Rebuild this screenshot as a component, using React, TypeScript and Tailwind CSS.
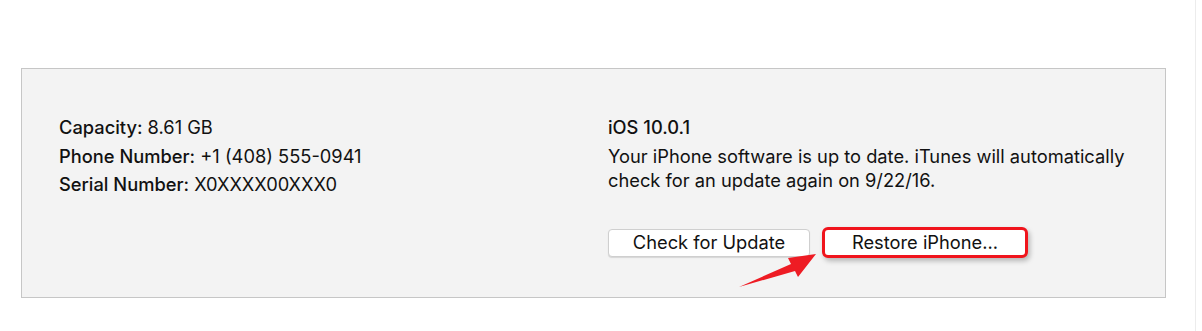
export default function App() {
  return (
    <div
      className="relative w-[1202px] h-[331px] bg-white overflow-hidden"
      style={{ fontFamily: "Inter, 'Noto Sans', sans-serif" }}
    >
      <div className="absolute right-[6px] top-0 h-full w-px bg-[#ececec]" />
      <div className="pt-[68px] pl-[21px]">
        <div className="w-[1145px] h-[230px] border border-[#c6c6c6] bg-[#f3f3f3] flex pl-[37px] pt-[44px] text-[18.3px] text-[#111]">
          <div className="w-[549px] leading-[28.5px]">
            <div>
              <span className="font-medium">Capacity:</span> 8.61 GB
            </div>
            <div>
              <span className="font-medium">Phone Number:</span> +1 (408) 555-0941
            </div>
            <div>
              <span className="font-medium">Serial Number:</span> X0XXXX00XXX0
            </div>
          </div>
          <div className="flex flex-col">
            <div className="font-medium leading-[28px]">iOS 10.0.1</div>
            <div className="mt-[3px] leading-[24px]">
              Your iPhone software is up to date. iTunes will automatically
              <br />
              check for an update again on 9/22/16.
            </div>
            <div className="mt-[35px] flex items-center gap-[12px]">
              <button className="w-[202px] h-[28px] rounded-[4px] bg-white border border-[#cfcfcf] shadow-[0_1px_1px_rgba(0,0,0,0.12)] text-[18.3px] leading-none">
                Check for Update
              </button>
              <div className="relative w-[206px] h-[31px] rounded-[6px] border-[3px] border-[#f0141c] bg-white shadow-[2px_3px_5px_rgba(0,0,0,0.25)] flex items-center justify-center text-[18.3px]">
                Restore iPhone...
              </div>
            </div>
          </div>
        </div>
      </div>
      <svg className="absolute left-0 top-0" width="1202" height="331" viewBox="0 0 1202 331">
        <polygon
          points="739,287 791,264 788,258 816,254 798,277 795,271"
          fill="#ee1c24"
        />
      </svg>
    </div>
  );
}
